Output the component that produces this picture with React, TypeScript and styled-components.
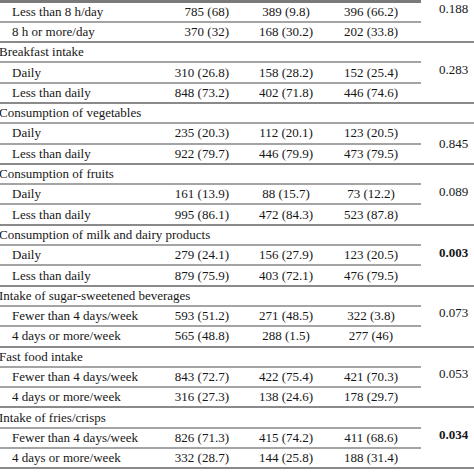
import styled, { createGlobalStyle } from "styled-components";

const GlobalStyle = createGlobalStyle`
  html, body {
    margin: 0;
    padding: 0;
    background: #ffffff;
  }
  body {
    font-family: "Liberation Serif", "DejaVu Serif", serif;
    color: #161616;
  }
`;

type Row = { label: string; total: string; a: string; b: string };
type Group = {
  title?: string;
  p: string;
  bold?: boolean;
  centered?: boolean; // p value sits in the middle of both rows, rule under header runs full width
  rows: [Row, Row];
};

const groups: Group[] = [
  {
    p: "0.188",
    rows: [
      { label: "Less than 8 h/day", total: "785 (68)", a: "389 (9.8)", b: "396 (66.2)" },
      { label: "8 h or more/day", total: "370 (32)", a: "168 (30.2)", b: "202 (33.8)" },
    ],
  },
  {
    title: "Breakfast intake",
    p: "0.283",
    rows: [
      { label: "Daily", total: "310 (26.8)", a: "158 (28.2)", b: "152 (25.4)" },
      { label: "Less than daily", total: "848 (73.2)", a: "402 (71.8)", b: "446 (74.6)" },
    ],
  },
  {
    title: "Consumption of vegetables",
    p: "0.845",
    centered: true,
    rows: [
      { label: "Daily", total: "235 (20.3)", a: "112 (20.1)", b: "123 (20.5)" },
      { label: "Less than daily", total: "922 (79.7)", a: "446 (79.9)", b: "473 (79.5)" },
    ],
  },
  {
    title: "Consumption of fruits",
    p: "0.089",
    rows: [
      { label: "Daily", total: "161 (13.9)", a: "88 (15.7)", b: "73 (12.2)" },
      { label: "Less than daily", total: "995 (86.1)", a: "472 (84.3)", b: "523 (87.8)" },
    ],
  },
  {
    title: "Consumption of milk and dairy products",
    p: "0.003",
    bold: true,
    rows: [
      { label: "Daily", total: "279 (24.1)", a: "156 (27.9)", b: "123 (20.5)" },
      { label: "Less than daily", total: "879 (75.9)", a: "403 (72.1)", b: "476 (79.5)" },
    ],
  },
  {
    title: "Intake of sugar-sweetened beverages",
    p: "0.073",
    rows: [
      { label: "Fewer than 4 days/week", total: "593 (51.2)", a: "271 (48.5)", b: "322 (3.8)" },
      { label: "4 days or more/week", total: "565 (48.8)", a: "288 (1.5)", b: "277 (46)" },
    ],
  },
  {
    title: "Fast food intake",
    p: "0.053",
    rows: [
      { label: "Fewer than 4 days/week", total: "843 (72.7)", a: "422 (75.4)", b: "421 (70.3)" },
      { label: "4 days or more/week", total: "316 (27.3)", a: "138 (24.6)", b: "178 (29.7)" },
    ],
  },
  {
    title: "Intake of fries/crisps",
    p: "0.034",
    bold: true,
    rows: [
      { label: "Fewer than 4 days/week", total: "826 (71.3)", a: "415 (74.2)", b: "411 (68.6)" },
      { label: "4 days or more/week", total: "332 (28.7)", a: "144 (25.8)", b: "188 (31.4)" },
    ],
  },
];

const ROW = "20.3px";
const THIN = "2px solid #a4a4a4";
const THICK = "2px solid #8a8a8a";

const Table = styled.div`
  width: 474px;
  height: 474px;
  overflow: hidden;
  display: flex;
  flex-direction: column;
  font-size: 13px;
`;

const TopRule = styled.div`
  width: 421px;
  height: 2.5px;
  flex: none;
  background: #7a7a7a;
`;

const GroupGrid = styled.div`
  display: grid;
  grid-template-columns: 160px 91px 70px 100px 53px;
  grid-auto-rows: ${ROW};
  flex: none;
`;

const Header = styled.div<{ $full?: boolean }>`
  grid-column: ${(p) => (p.$full ? "1 / 6" : "1 / 5")};
  display: flex;
  align-items: center;
  box-sizing: border-box;
  border-bottom: ${THIN};
  white-space: nowrap;
  margin-left: -1px;
`;

const Cell = styled.div<{ $align: "left" | "right" | "center"; $last?: boolean }>`
  display: flex;
  align-items: center;
  box-sizing: border-box;
  white-space: nowrap;
  justify-content: ${(p) =>
    p.$align === "left" ? "flex-start" : p.$align === "right" ? "flex-end" : "center"};
  padding-left: ${(p) => (p.$align === "left" ? "12px" : "0")};
  padding-right: ${(p) => (p.$align === "right" ? "22px" : "0")};
  border-bottom: ${(p) => (p.$last ? THICK : THIN)};
`;

const PCell = styled.div<{ $bold?: boolean; $centered?: boolean; $start: number }>`
  grid-column: 5;
  grid-row: ${(p) => `${p.$start} / span 2`};
  display: flex;
  justify-content: center;
  align-items: ${(p) => (p.$centered ? "center" : "flex-start")};
  padding-left: 12px;
  padding-top: ${(p) => (p.$centered ? "0" : "0.5px")};
  line-height: 12px;
  box-sizing: border-box;
  border-bottom: ${THICK};
  font-weight: ${(p) => (p.$bold ? 700 : 400)};
`;

function DataRow({ row, last }: { row: Row; last?: boolean }) {
  return (
    <>
      <Cell $align="left" $last={last}>{row.label}</Cell>
      <Cell $align="right" $last={last}>{row.total}</Cell>
      <Cell $align="center" $last={last}>{row.a}</Cell>
      <Cell $align="center" $last={last}>{row.b}</Cell>
    </>
  );
}

function GroupBlock({ group }: { group: Group }) {
  const start = group.title ? 2 : 1;
  return (
    <GroupGrid>
      {group.title && <Header $full={group.centered}>{group.title}</Header>}
      {group.title && !group.centered && <div />}
      <DataRow row={group.rows[0]} />
      <PCell $bold={group.bold} $centered={group.centered} $start={start}>
        {group.p}
      </PCell>
      <DataRow row={group.rows[1]} last />
    </GroupGrid>
  );
}

export default function App() {
  return (
    <>
      <GlobalStyle />
      <Table>
        <TopRule />
        {groups.map((g) => (
          <GroupBlock key={g.p} group={g} />
        ))}
      </Table>
    </>
  );
}
